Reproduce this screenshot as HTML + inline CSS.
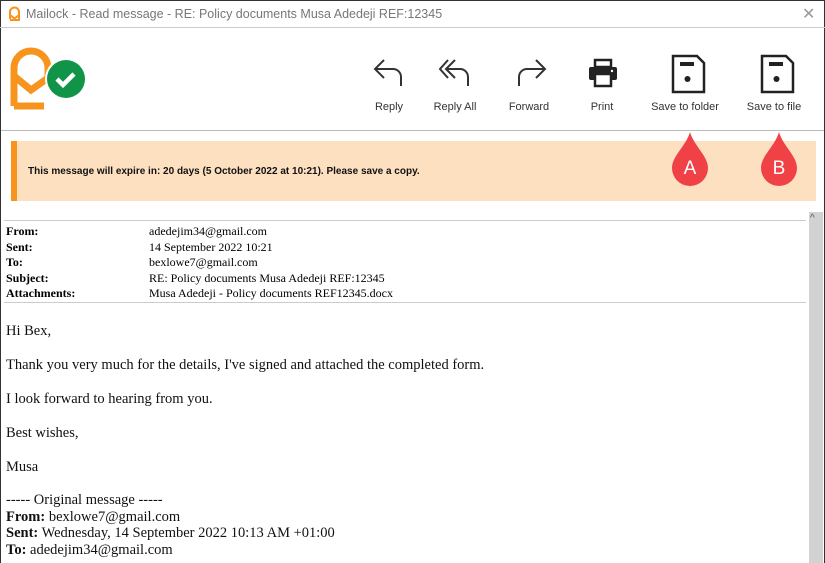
<!DOCTYPE html>
<html><head><meta charset="utf-8"><style>
*{margin:0;padding:0;box-sizing:border-box}
body{width:825px;height:563px;overflow:hidden;background:#fff;font-family:"Liberation Sans",sans-serif;position:relative}
.frame{position:absolute;inset:0;border:1px solid #333;border-bottom:none}
.title{position:absolute;left:0;top:0;width:825px;height:28px;border-bottom:1px solid #ccc;}
.title span{position:absolute;left:26px;top:7px;font-size:12.5px;color:#777}
.tb{position:absolute;top:101px;font-size:11px;color:#333;text-align:center;width:90px}
.hr{position:absolute;left:1px;right:1px;top:130px;border-top:1px solid #bbb}
.banner{position:absolute;left:11px;top:141px;width:805px;height:60px;background:#fde0c0;border-left:6px solid #f7941d}
.banner span{position:absolute;left:11px;top:25px;font-size:10px;font-weight:bold;color:#111}
.serif{font-family:"Liberation Serif",serif}
.hd{position:absolute;font-size:12px;line-height:15.5px}
.b{position:absolute;left:6px;font-size:14.5px;color:#111}
.sb{position:absolute;left:809px;top:212px;width:14px;height:351px;background:#d2d2d2}
</style></head><body>
<div class="frame"></div>
<div class="title">
<svg style="position:absolute;left:8px;top:6px" width="13" height="16" viewBox="0 0 13 16"><path d="M2 13V6a4.5 4.5 0 0 1 9 0v3" fill="none" stroke="#f7941d" stroke-width="2"/><path d="M2 9l4.5 3.5L11 9v5H2" fill="none" stroke="#f7941d" stroke-width="2"/></svg>
<span>Mailock - Read message - RE: Policy documents Musa Adedeji REF:12345</span>
<span style="left:802px;top:4px;font-size:16px;color:#999">✕</span>
</div>
<svg style="position:absolute;left:9px;top:46px" width="80" height="66" viewBox="0 0 80 66">
<path d="M5 60V22a17 17 0 0 1 34 0v16" fill="none" stroke="#f7941d" stroke-width="7"/>
<path d="M5 30l17 14 17-12" fill="none" stroke="#f7941d" stroke-width="7"/>
<path d="M5 60h30" stroke="#f7941d" stroke-width="7"/>
<circle cx="57" cy="33" r="21" fill="#fff"/>
<circle cx="57" cy="33" r="19" fill="#119447"/>
<path d="M48 33l6 6 11-11" fill="none" stroke="#fff" stroke-width="4.5"/>
</svg>
<svg style="position:absolute;left:372px;top:56px" width="34" height="34" viewBox="0 0 34 34" fill="none" stroke="#333" stroke-width="2"><path d="M12 4L3 13l9 9M3 13h18a8 8 0 0 1 8 8v9"/></svg>
<svg style="position:absolute;left:438px;top:56px" width="34" height="34" viewBox="0 0 34 34" fill="none" stroke="#333" stroke-width="2"><path d="M10 4L2 13l8 9M17 4l-9 9 9 9M8 13h14a8 8 0 0 1 8 8v9"/></svg>
<svg style="position:absolute;left:516px;top:56px" width="34" height="34" viewBox="0 0 34 34" fill="none" stroke="#333" stroke-width="2"><path d="M20 4l9 9-9 9M29 13H11a8 8 0 0 0-8 8v9"/></svg>
<svg style="position:absolute;left:587px;top:58px" width="32" height="30" viewBox="0 0 32 30"><rect x="8" y="2" width="16" height="7" fill="none" stroke="#222" stroke-width="2.5"/><rect x="2" y="9" width="28" height="13" rx="2" fill="#222"/><rect x="8" y="16" width="16" height="12" fill="#fff" stroke="#222" stroke-width="2.5"/><circle cx="25" cy="13" r="1.2" fill="#fff"/></svg>
<svg style="position:absolute;left:670px;top:54px" width="36" height="40" viewBox="0 0 36 40"><path d="M3 2h24l7 7v29H3z" fill="none" stroke="#222" stroke-width="2.5"/><rect x="10" y="8" width="14" height="4" fill="#222"/><circle cx="17.5" cy="25" r="3" fill="#222"/></svg>
<svg style="position:absolute;left:759px;top:54px" width="36" height="40" viewBox="0 0 36 40"><path d="M3 2h24l7 7v29H3z" fill="none" stroke="#222" stroke-width="2.5"/><rect x="10" y="8" width="14" height="4" fill="#222"/><circle cx="17.5" cy="25" r="3" fill="#222"/></svg>
<div class="tb" style="left:344px">Reply</div>
<div class="tb" style="left:410px">Reply All</div>
<div class="tb" style="left:484px">Forward</div>
<div class="tb" style="left:557px">Print</div>
<div class="tb" style="left:640px;width:90px">Save to folder</div>
<div class="tb" style="left:729px">Save to file</div>
<div class="hr"></div>
<div class="banner"><span>This message will expire in: 20 days (5 October 2022 at 10:21). Please save a copy.</span></div>
<svg style="position:absolute;left:668px;top:130px" width="44" height="58" viewBox="0 0 44 58"><path d="M22 2C18 16 4 26 4 38a18 18 0 0 0 36 0C40 26 26 16 22 2z" fill="#ef4146"/><text x="22" y="44" font-size="19" fill="#fff" text-anchor="middle" font-family="Liberation Sans">A</text></svg>
<svg style="position:absolute;left:757px;top:130px" width="44" height="58" viewBox="0 0 44 58"><path d="M22 2C18 16 4 26 4 38a18 18 0 0 0 36 0C40 26 26 16 22 2z" fill="#ef4146"/><text x="22" y="44" font-size="19" fill="#fff" text-anchor="middle" font-family="Liberation Sans">B</text></svg>
<div style="position:absolute;left:4px;top:220px;width:802px;border-top:1px solid #ccc"></div>
<div class="hd serif" style="left:6px;top:224px;font-weight:bold">From:<br>Sent:<br>To:<br>Subject:<br>Attachments:</div>
<div class="hd serif" style="left:149px;top:224px">adedejim34@gmail.com<br>14 September 2022 10:21<br>bexlowe7@gmail.com<br>RE: Policy documents Musa Adedeji REF:12345<br>Musa Adedeji - Policy documents REF12345.docx</div>
<div style="position:absolute;left:4px;top:302px;width:802px;border-top:1px solid #ccc"></div>
<div class="b serif" style="top:323px">Hi Bex,</div>
<div class="b serif" style="top:357px">Thank you very much for the details, I've signed and attached the completed form.</div>
<div class="b serif" style="top:391px">I look forward to hearing from you.</div>
<div class="b serif" style="top:425px">Best wishes,</div>
<div class="b serif" style="top:459px">Musa</div>
<div class="b serif" style="top:492px;line-height:16.7px">----- Original message -----<br><b>From:</b> bexlowe7@gmail.com<br><b>Sent:</b> Wednesday, 14 September 2022 10:13 AM +01:00<br><b>To:</b> adedejim34@gmail.com</div>
<div class="sb"></div>
<div style="position:absolute;left:810px;top:213px;font-size:10px;color:#555">^</div>
</body></html>
